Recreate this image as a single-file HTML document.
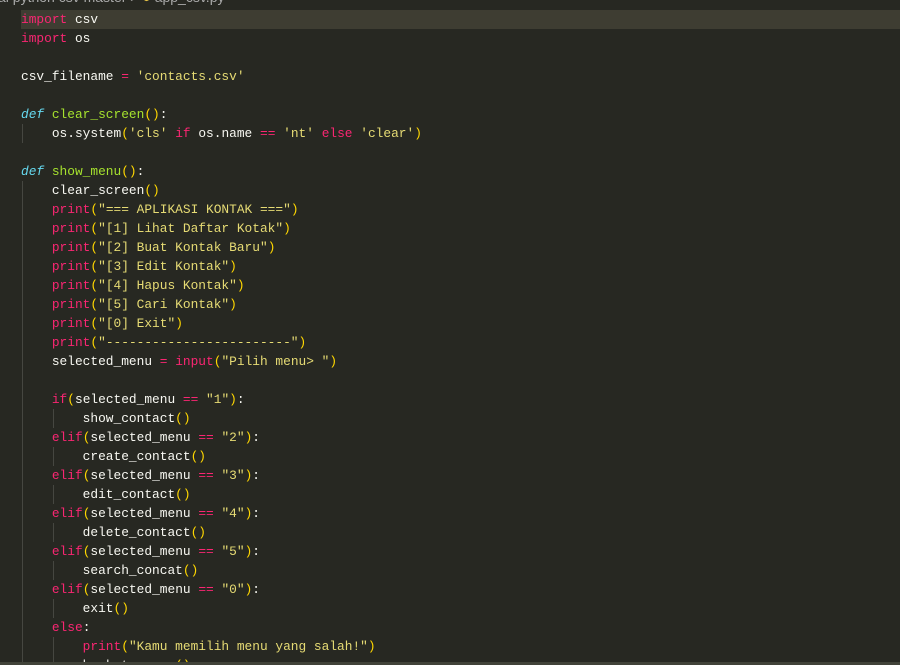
<!DOCTYPE html>
<html><head><meta charset="utf-8"><style>
html,body{margin:0;padding:0;background:#272822;width:900px;height:665px;overflow:hidden;position:relative}
.bc{position:absolute;left:-2px;top:-11px;font:14px "Liberation Sans",sans-serif;color:#a9a9a9;white-space:pre}
.hl{position:absolute;left:21px;right:0;top:10px;height:19px;background:#3e3d32}
.code{position:absolute;left:21px;top:10px;font:12.85px/19px "Liberation Mono",monospace;color:#f8f8f2;white-space:pre}
.g{position:absolute;width:1px;background:#464741}
.k{color:#f92672}.s{color:#e6db74}.f{color:#a6e22e}.d{color:#66d9ef;font-style:italic}.p{color:#ffd700}
.bot{position:absolute;left:0;right:0;top:662px;height:3px;background:#414339}
</style></head><body>
<div class="bc">al python csv master &gt; <span style="color:#e8c547">●</span> app_csv.py</div>
<div class="hl"></div>
<div class="g" style="left:22px;top:124px;height:19px"></div>
<div class="g" style="left:22px;top:181px;height:484px"></div>
<div class="g" style="left:53px;top:409px;height:19px"></div>
<div class="g" style="left:53px;top:447px;height:19px"></div>
<div class="g" style="left:53px;top:485px;height:19px"></div>
<div class="g" style="left:53px;top:523px;height:19px"></div>
<div class="g" style="left:53px;top:561px;height:19px"></div>
<div class="g" style="left:53px;top:599px;height:19px"></div>
<div class="g" style="left:53px;top:637px;height:28px"></div>
<div class="code"><span class="k">import</span> csv
<span class="k">import</span> os

csv_filename <span class="k">=</span> <span class="s">'contacts.csv'</span>

<span class="d">def</span> <span class="f">clear_screen</span><span class="p">()</span>:
    os.system<span class="p">(</span><span class="s">'cls'</span> <span class="k">if</span> os.name <span class="k">==</span> <span class="s">'nt'</span> <span class="k">else</span> <span class="s">'clear'</span><span class="p">)</span>

<span class="d">def</span> <span class="f">show_menu</span><span class="p">()</span>:
    clear_screen<span class="p">()</span>
    <span class="k">print</span><span class="p">(</span><span class="s">"=== APLIKASI KONTAK ==="</span><span class="p">)</span>
    <span class="k">print</span><span class="p">(</span><span class="s">"[1] Lihat Daftar Kotak"</span><span class="p">)</span>
    <span class="k">print</span><span class="p">(</span><span class="s">"[2] Buat Kontak Baru"</span><span class="p">)</span>
    <span class="k">print</span><span class="p">(</span><span class="s">"[3] Edit Kontak"</span><span class="p">)</span>
    <span class="k">print</span><span class="p">(</span><span class="s">"[4] Hapus Kontak"</span><span class="p">)</span>
    <span class="k">print</span><span class="p">(</span><span class="s">"[5] Cari Kontak"</span><span class="p">)</span>
    <span class="k">print</span><span class="p">(</span><span class="s">"[0] Exit"</span><span class="p">)</span>
    <span class="k">print</span><span class="p">(</span><span class="s">"------------------------"</span><span class="p">)</span>
    selected_menu <span class="k">=</span> <span class="k">input</span><span class="p">(</span><span class="s">"Pilih menu&gt; "</span><span class="p">)</span>

    <span class="k">if</span><span class="p">(</span>selected_menu <span class="k">==</span> <span class="s">"1"</span><span class="p">)</span>:
        show_contact<span class="p">()</span>
    <span class="k">elif</span><span class="p">(</span>selected_menu <span class="k">==</span> <span class="s">"2"</span><span class="p">)</span>:
        create_contact<span class="p">()</span>
    <span class="k">elif</span><span class="p">(</span>selected_menu <span class="k">==</span> <span class="s">"3"</span><span class="p">)</span>:
        edit_contact<span class="p">()</span>
    <span class="k">elif</span><span class="p">(</span>selected_menu <span class="k">==</span> <span class="s">"4"</span><span class="p">)</span>:
        delete_contact<span class="p">()</span>
    <span class="k">elif</span><span class="p">(</span>selected_menu <span class="k">==</span> <span class="s">"5"</span><span class="p">)</span>:
        search_concat<span class="p">()</span>
    <span class="k">elif</span><span class="p">(</span>selected_menu <span class="k">==</span> <span class="s">"0"</span><span class="p">)</span>:
        exit<span class="p">()</span>
    <span class="k">else</span>:
        <span class="k">print</span><span class="p">(</span><span class="s">"Kamu memilih menu yang salah!"</span><span class="p">)</span>
        back_to_menu<span class="p">()</span></div>
<div class="bot"></div>
</body></html>
